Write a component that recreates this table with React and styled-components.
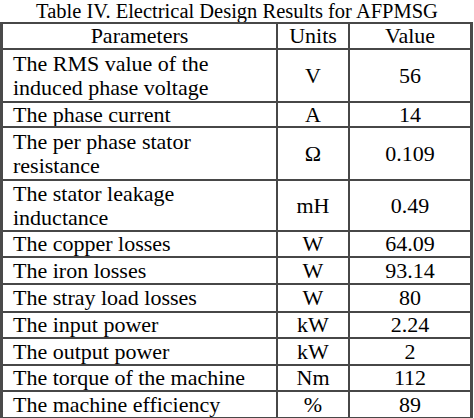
import React from "react";
import styled, { createGlobalStyle } from "styled-components";

const GlobalStyle = createGlobalStyle`
  html, body {
    margin: 0;
    padding: 0;
    background: #ffffff;
    overflow: hidden;
  }
  body {
    width: 474px;
    height: 418px;
    font-family: "Liberation Serif", "Times New Roman", serif;
    color: #000000;
  }
`;

const Page = styled.div`
  width: 474px;
  display: flex;
  flex-direction: column;
`;

const Title = styled.div`
  height: 22px;
  line-height: 22px;
  font-size: 20.5px;
  text-align: center;
  white-space: nowrap;
`;

const Table = styled.div`
  width: 473px;
  box-sizing: border-box;
  border-top: 2px solid #474747;
  border-left: 3px solid #4a4a4a;
  border-right: 3px solid #4a4a4a;
  display: flex;
  flex-direction: column;
`;

const Row = styled.div`
  display: grid;
  grid-template-columns: 275px 72px 1fr;
  height: ${(p) => p.$h}px;
  box-sizing: border-box;
  border-bottom: 2px solid #474747;
`;

const Cell = styled.div`
  display: flex;
  align-items: center;
  justify-content: ${(p) => (p.$left ? "flex-start" : "center")};
  padding: ${(p) => (p.$left ? "0 0 0 10px" : "0")};
  text-align: ${(p) => (p.$left ? "left" : "center")};
  font-size: 22px;
  line-height: 24px;
  white-space: pre-line;
  box-sizing: border-box;
  border-right: ${(p) => (p.$last ? "none" : "2px solid #474747")};
  overflow: hidden;
`;

const rows = [
  { p: "The RMS value of the\ninduced phase voltage", u: "V", v: "56", h: 53 },
  { p: "The phase current", u: "A", v: "14", h: 25 },
  { p: "The per phase stator\nresistance", u: "Ω", v: "0.109", h: 53 },
  { p: "The stator leakage\ninductance", u: "mH", v: "0.49", h: 51 },
  { p: "The copper losses", u: "W", v: "64.09", h: 26 },
  { p: "The iron losses", u: "W", v: "93.14", h: 27 },
  { p: "The stray load losses", u: "W", v: "80", h: 28 },
  { p: "The input power", u: "kW", v: "2.24", h: 26 },
  { p: "The output power", u: "kW", v: "2", h: 27 },
  { p: "The torque of the machine", u: "Nm", v: "112", h: 26 },
  { p: "The machine efficiency", u: "%", v: "89", h: 27 },
];

export default function App() {
  return (
    <>
      <GlobalStyle />
      <Page>
        <Title>Table IV. Electrical Design Results for AFPMSG</Title>
        <Table>
          <Row $h={26}>
            <Cell>Parameters</Cell>
            <Cell>Units</Cell>
            <Cell $last>Value</Cell>
          </Row>
          {rows.map((r, i) => (
            <Row key={i} $h={r.h}>
              <Cell $left>{r.p}</Cell>
              <Cell>{r.u}</Cell>
              <Cell $last>{r.v}</Cell>
            </Row>
          ))}
        </Table>
      </Page>
    </>
  );
}
